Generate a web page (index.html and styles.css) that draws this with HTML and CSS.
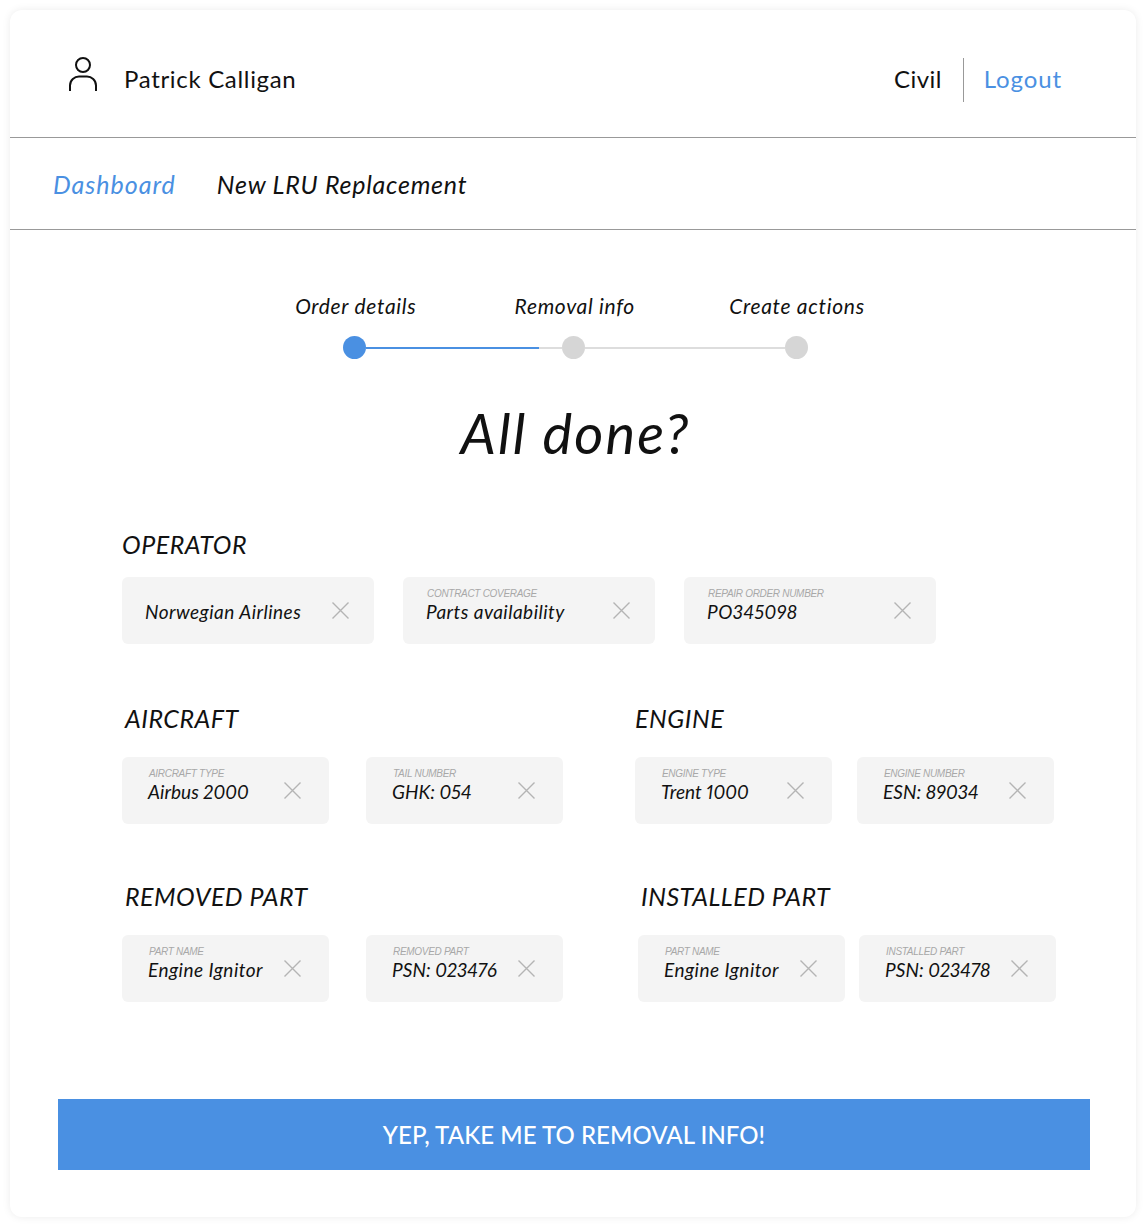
FILE: index.html
```html
<!DOCTYPE html>
<html lang="en">
<head>
<meta charset="utf-8">
<title>All done?</title>
<link rel="stylesheet" href="styles.css">
</head>
<body>
<main class="card">
  <header class="topbar">
    <svg class="user-icon" width="30" height="36" viewBox="0 0 30 36" fill="none" stroke="#111" stroke-width="2">
      <circle cx="15" cy="9" r="7"/>
      <path d="M2 35v-5.500C2 24 6.500 20.500 11 20.500h8c4.500 0 9 3.500 9 9V35"/>
    </svg>
    <span class="user-name">Patrick Calligan</span>
    <span class="role">Civil</span>
    <a class="logout">Logout</a>
  </header>
  <nav class="crumbs">
    <a class="crumb-link">Dashboard</a>
    <span class="crumb-current">New LRU Replacement</span>
  </nav>

  <section class="stepper">
    <div class="step-labels">
      <span>Order details</span>
      <span>Removal info</span>
      <span>Create actions</span>
    </div>
    <div class="step-track">
      <i class="dot dot-active"></i>
      <i class="seg seg-first"><b class="seg-fill"></b></i>
      <i class="dot"></i>
      <i class="seg seg-second"></i>
      <i class="dot"></i>
    </div>
  </section>

  <h1 class="title">All done?</h1>

  <section class="operator">
    <h2 class="group-title title-flush">OPERATOR</h2>
    <div class="chips chips-operator">
      <div class="chip chip-wide chip-plain"><div class="chip-text"><span class="chip-value">Norwegian Airlines</span></div><svg class="x" viewBox="0 0 17 17"><path d="M.5.500l16 16M16.500.500l-16 16"/></svg></div>
      <div class="chip chip-wide"><div class="chip-text"><span class="chip-label">CONTRACT COVERAGE</span><span class="chip-value">Parts availability</span></div><svg class="x" viewBox="0 0 17 17"><path d="M.5.500l16 16M16.500.500l-16 16"/></svg></div>
      <div class="chip chip-wide"><div class="chip-text"><span class="chip-label">REPAIR ORDER NUMBER</span><span class="chip-value">PO345098</span></div><svg class="x" viewBox="0 0 17 17"><path d="M.5.500l16 16M16.500.500l-16 16"/></svg></div>
    </div>
  </section>

  <section class="pair pair-one">
    <div class="group group-aircraft">
      <h2 class="group-title">AIRCRAFT</h2>
      <div class="chips chips-left">
        <div class="chip chip-207"><div class="chip-text"><span class="chip-label">AIRCRAFT TYPE</span><span class="chip-value chip-num">Airbus 2000</span></div><svg class="x" viewBox="0 0 17 17"><path d="M.5.500l16 16M16.500.500l-16 16"/></svg></div>
        <div class="chip chip-197"><div class="chip-text"><span class="chip-label">TAIL NUMBER</span><span class="chip-value chip-num">GHK: 054</span></div><svg class="x" viewBox="0 0 17 17"><path d="M.5.500l16 16M16.500.500l-16 16"/></svg></div>
      </div>
    </div>
    <div class="group">
      <h2 class="group-title title-flush">ENGINE</h2>
      <div class="chips chips-engine">
        <div class="chip chip-197"><div class="chip-text"><span class="chip-label">ENGINE TYPE</span><span class="chip-value chip-num">Trent 1000</span></div><svg class="x" viewBox="0 0 17 17"><path d="M.5.500l16 16M16.500.500l-16 16"/></svg></div>
        <div class="chip chip-197"><div class="chip-text"><span class="chip-label">ENGINE NUMBER</span><span class="chip-value chip-num">ESN: 89034</span></div><svg class="x" viewBox="0 0 17 17"><path d="M.5.500l16 16M16.500.500l-16 16"/></svg></div>
      </div>
    </div>
  </section>

  <section class="pair pair-two">
    <div class="group group-removed">
      <h2 class="group-title">REMOVED PART</h2>
      <div class="chips chips-left">
        <div class="chip chip-207"><div class="chip-text"><span class="chip-label">PART NAME</span><span class="chip-value">Engine Ignitor</span></div><svg class="x" viewBox="0 0 17 17"><path d="M.5.500l16 16M16.500.500l-16 16"/></svg></div>
        <div class="chip chip-197"><div class="chip-text"><span class="chip-label">REMOVED PART</span><span class="chip-value chip-num">PSN: 023476</span></div><svg class="x" viewBox="0 0 17 17"><path d="M.5.500l16 16M16.500.500l-16 16"/></svg></div>
      </div>
    </div>
    <div class="group">
      <h2 class="group-title">INSTALLED PART</h2>
      <div class="chips chips-installed">
        <div class="chip chip-207"><div class="chip-text"><span class="chip-label">PART NAME</span><span class="chip-value">Engine Ignitor</span></div><svg class="x" viewBox="0 0 17 17"><path d="M.5.500l16 16M16.500.500l-16 16"/></svg></div>
        <div class="chip chip-197"><div class="chip-text"><span class="chip-label">INSTALLED PART</span><span class="chip-value chip-num">PSN: 023478</span></div><svg class="x" viewBox="0 0 17 17"><path d="M.5.500l16 16M16.500.500l-16 16"/></svg></div>
      </div>
    </div>
  </section>

  <button class="cta" type="button">YEP, TAKE ME TO REMOVAL INFO!</button>
</main>
</body>
</html>
```

FILE: styles.css
```css
* { box-sizing: border-box; }
html, body { margin: 0; padding: 0; background: #fff; }
body {
  padding: 10px;
  height: 1227px;
  overflow: hidden;
  font-family: "Lato", "Liberation Sans", sans-serif;
  color: #111;
}
.card {
  width: 1126px;
  height: 1207px;
  background: #fff;
  border-radius: 12px;
  box-shadow: 0 0 8px rgba(0, 0, 0, 0.08);
  overflow: hidden;
}

/* Top bar */
.topbar {
  height: 128px;
  border-bottom: 1px solid #999;
  display: flex;
  align-items: center;
  padding: 10px 74px 0 58px;
  font-size: 24px;
  letter-spacing: 0.68px;
}
.user-icon { flex: none; margin-top: -10px; }
.user-name { margin-left: 26px; }
.role {
  margin: 2px 0 0 auto;
  height: 44px;
  line-height: 42px;
  padding-right: 21px;
  border-right: 1px solid #999;
  letter-spacing: 0.4px;
}
.logout { margin-left: 20px; color: #4a90e2; letter-spacing: 0.9px; }

/* Breadcrumb */
.crumbs {
  height: 92px;
  border-bottom: 1px solid #999;
  display: flex;
  align-items: center;
  gap: 41px;
  padding: 0 0 0 43px;
  font-size: 25px;
  font-style: italic;
  letter-spacing: 0.75px;
}
.crumb-link { color: #4a90e2; letter-spacing: 1px; }

/* Stepper */
.stepper { padding-top: 62px; }
.step-labels {
  display: grid;
  grid-template-columns: 219.5px 218.5px 226px;
  padding-left: 236px;
  font-size: 21px;
  font-style: italic;
  letter-spacing: 0.7px;
  line-height: 28px;
  text-align: center;
}
.step-track {
  display: flex;
  align-items: center;
  margin-top: 16px;
  padding-left: 333px;
}
.dot {
  flex: none;
  width: 23px;
  height: 23px;
  border-radius: 50%;
  background: #d6d6d6;
}
.dot-active { background: #4a90e2; }
.seg {
  flex: none;
  height: 2px;
  background: #ddd;
  display: block;
}
.seg-first { width: 196px; }
.seg-second { width: 200px; }
.seg-fill {
  display: block;
  width: 173px;
  height: 2px;
  background: #4a90e2;
}

.title {
  margin: 42px 0 0;
  padding-left: 5px;
  text-align: center;
  font-size: 56px;
  line-height: 64px;
  font-weight: 400;
  font-style: italic;
  letter-spacing: 2.1px;
}

/* Groups */
.group-title {
  margin: 0;
  padding-left: 3px;
  font-size: 25px;
  line-height: 30px;
  font-weight: 400;
  font-style: italic;
  letter-spacing: 0.5px;
}
.title-flush { padding-left: 0; }
.operator { margin-top: 64px; padding-left: 112px; }
.chips { display: flex; }
.chips-operator { gap: 29px; margin-top: 18px; }
.chips-left { gap: 37px; margin-top: 24px; }
.chips-engine { gap: 25px; margin-top: 24px; }
.chips-installed { gap: 14px; margin-top: 24px; }
.pair { display: flex; padding-left: 112px; }
.pair-one { margin-top: 59px; }
.pair-two { margin-top: 57px; }
.group-aircraft { width: 513px; }
.group-removed { width: 516px; }

/* Chips */
.chip {
  height: 67px;
  flex: none;
  display: flex;
  align-items: flex-start;
  justify-content: space-between;
  background: #f4f4f4;
  border-radius: 6px;
  padding: 11px 28px 0 26px;
}
.chip-wide { width: 252px; padding-left: 23px; padding-right: 25px; }
.chip-207 { width: 207px; }
.chip-197 { width: 197px; }
.chip-text { display: flex; flex-direction: column; }
.chip-plain .chip-text { padding-top: 12px; }
.chip-label {
  font-family: "Liberation Sans", sans-serif;
  font-size: 10px;
  line-height: 12px;
  font-style: italic;
  letter-spacing: -0.3px;
  color: #a8a8a8;
  margin-left: 1px;
}
.chip-value {
  font-size: 19px;
  line-height: 24px;
  font-style: italic;
  letter-spacing: 0.47px;
  font-variant-numeric: proportional-nums;
  white-space: nowrap;
}
.chip-num { letter-spacing: 0.05px; }
.x {
  flex: none;
  width: 17px;
  height: 17px;
  margin-top: 14px;
  fill: none;
  stroke: #b4b4b4;
  stroke-width: 1.4;
}

/* CTA */
.cta {
  display: block;
  width: 1032px;
  height: 71px;
  margin: 97px 0 0 48px;
  border: 0;
  background: #4a90e2;
  color: #fff;
  font-family: inherit;
  font-size: 24px;
  font-weight: 500;
  letter-spacing: 0.05px;
}
```
